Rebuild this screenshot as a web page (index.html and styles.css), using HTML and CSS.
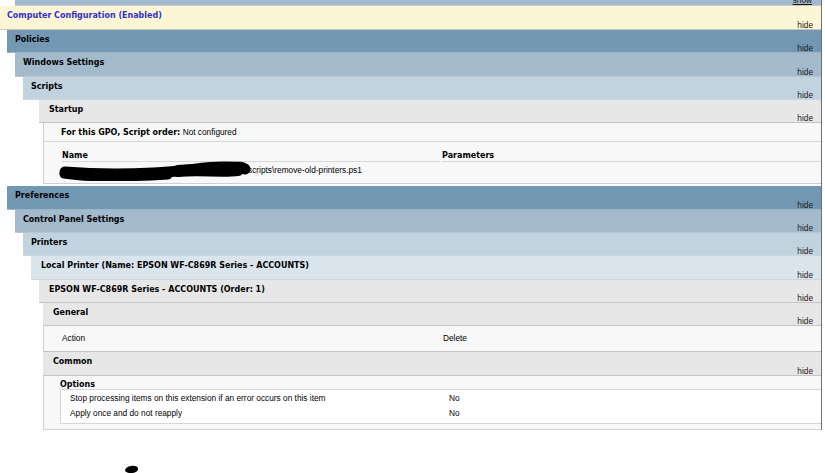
FILE: index.html
```html
<!DOCTYPE html>
<html>
<head>
<meta charset="utf-8">
<link rel="stylesheet" href="styles.css">
</head>
<body>
<div class="page">
  <div class="strip"><span class="show">show</span></div>
  <div class="hdr cfg tall"><span class="t">Computer Configuration (Enabled)</span><span class="hide">hide</span></div>

  <div class="sec l1">
    <div class="hdr c1"><span class="t">Policies</span><span class="hide">hide</span></div>
    <div class="sec l2">
      <div class="hdr c2 tall"><span class="t">Windows Settings</span><span class="hide">hide</span></div>
      <div class="sec l3">
        <div class="hdr c3"><span class="t">Scripts</span><span class="hide">hide</span></div>
        <div class="sec l5">
          <div class="hdr c5 pad10"><span class="t">Startup</span><span class="hide">hide</span></div>
          <div class="body">
            <div class="gpo"><b>For this GPO, Script order:</b> Not configured</div>
            <div class="tbl">
              <div class="th"><span class="col1">Name</span><span class="col2">Parameters</span></div>
              <div class="tr">
                <span class="col1 path">scripts\remove-old-printers.ps1</span><span class="col2"></span>
                <svg class="scribble" width="194" height="22" viewBox="0 0 194 22"><path d="M7 13 C 30 15, 60 16, 95 14 S 145 8, 165 8 S 184 8, 187 10" fill="none" stroke="#000" stroke-width="11" stroke-linecap="round"/><path d="M6 15 C 25 18, 60 19, 110 16" fill="none" stroke="#000" stroke-width="9" stroke-linecap="round"/><path d="M120 12 C 140 10, 165 13, 180 11" fill="none" stroke="#000" stroke-width="12" stroke-linecap="round"/></svg>
              </div>
            </div>
          </div>
        </div>
      </div>
    </div>
  </div>

  <div class="sec l1 pref">
    <div class="hdr c1 tall"><span class="t">Preferences</span><span class="hide">hide</span></div>
    <div class="sec l2">
      <div class="hdr c2"><span class="t">Control Panel Settings</span><span class="hide">hide</span></div>
      <div class="sec l3">
        <div class="hdr c3"><span class="t">Printers</span><span class="hide">hide</span></div>
        <div class="sec l4">
          <div class="hdr c4 tall pad10"><span class="t">Local Printer (Name: EPSON WF-C869R Series - ACCOUNTS)</span><span class="hide">hide</span></div>
          <div class="sec l4b">
            <div class="hdr c5 pad10"><span class="t">EPSON WF-C869R Series - ACCOUNTS (Order: 1)</span><span class="hide">hide</span></div>
            <div class="sec l6">
              <div class="hdr c5 pad10"><span class="t">General</span><span class="hide">hide</span></div>
              <div class="row"><span class="col1">Action</span><span class="col2">Delete</span></div>
              <div class="hdr c5 tall pad10"><span class="t">Common</span><span class="hide">hide</span></div>
              <div class="opts">
                <div class="opttitle">Options</div>
                <div class="optbox">
                  <div class="optrow"><span class="oname">Stop processing items on this extension if an error occurs on this item</span><span class="oval">No</span></div>
                  <div class="optrow"><span class="oname">Apply once and do not reapply</span><span class="oval">No</span></div>
                </div>
              </div>
            </div>
          </div>
        </div>
      </div>
    </div>
  </div>
</div>
<div class="blob"></div>
</body>
</html>
```

FILE: styles.css
```css
* { box-sizing: border-box; }
body {
  margin: 0;
  background: #fff;
  font-family: "Liberation Sans", Arial, sans-serif;
  font-size: 8.3px;
  color: #000;
  position: relative;
  height: 473px;
}
b, .hdr .t, .th, .opttitle {
  font-family: "DejaVu Sans", Verdana, sans-serif;
  font-weight: bold;
  font-size: 8px;
}
.page {
  width: 822px;
  border-right: 1px solid #6f6f6f;
  background: #fff;
}
.strip {
  height: 6px;
  margin-left: 15px;
  background: #a3bace;
  border-bottom: 1px solid #c9c9c9;
  overflow: hidden;
  display: flex;
  justify-content: flex-end;
  align-items: flex-end;
  padding-right: 9px;
}
.show {
  text-decoration: underline;
  line-height: 9px;
  color: #111;
}
.hdr {
  display: flex;
  justify-content: space-between;
  height: 23px;
  border-bottom: 1px solid #c3c6c9;
  padding: 5px 8px 0 8px;
  line-height: 9px;
}
.hdr.tall { height: 24px; }
.hdr.pad10 { padding-left: 10px; }
.hdr .hide { align-self: flex-end; color: #1a1a1a; margin-bottom: -1px; }
.cfg { background: #fdf6d6; padding-left: 7px; border-bottom-color: #c9c6b8; }
.cfg .t { color: #3232c8; }
.c1 { background: #7398b4; border-bottom-color: #9fb3c3; }
.c2 { background: #a3bacd; border-bottom-color: #b9c7d2; }
.c3 { background: #c1d3df; border-bottom-color: #cdd6dc; }
.c4 { background: #dae4ec; border-bottom-color: #cfd5da; }
.c5 { background: #e7e7e7; border-bottom-color: #c4c4c4; }

.l1 { margin-left: 7px; }
.l2 { margin-left: 8px; }
.l3 { margin-left: 8px; }
.l4 { margin-left: 8px; }
.l4b { margin-left: 8px; }
.l5 { margin-left: 16px; }
.l6 { margin-left: 4px; }
.pref { margin-top: 2px; }

.body {
  margin-left: 4px;
  background: #f8f8f8;
  border-left: 1px solid #cfcfcf;
  border-bottom: 1px solid #cfcfcf;
  height: 61px;
}
.gpo {
  height: 19px;
  padding: 5px 0 0 17px;
  line-height: 9px;
  border-bottom: 1px solid #d4d4d4;
}
.tbl { padding: 0 0 0 18px; }
.th {
  display: flex;
  height: 20px;
  padding-top: 9px;
  line-height: 9px;
}
.th span { border-bottom: 1px solid #d8d8d8; padding-bottom: 2px; }
.col1 { width: 380px; flex: none; }
.col2 { flex: 1; }
.th .col1 { width: 378px; margin-right: 2px; }
.tr {
  display: flex;
  height: 18px;
  line-height: 9px;
  padding-top: 4px;
  position: relative;
}
.path { padding-left: 186px; }
.scribble { position: absolute; left: -4px; top: -3px; }

.row {
  display: flex;
  height: 26px;
  background: #f8f8f8;
  border-left: 1px solid #cfcfcf;
  border-bottom: 1px solid #c4c4c4;
  padding: 8px 0 0 18px;
  line-height: 9px;
}
.row .col1 { width: 381px; }

.opts {
  background: #f8f8f8;
  border-left: 1px solid #cfcfcf;
  border-bottom: 1px solid #d4d4d4;
  height: 54px;
  padding: 3px 0 0 16px;
}
.opttitle { line-height: 9px; height: 10px; padding-top: 1px; }
.optbox {
  background: #fff;
  border: 1px solid #d6d6d6;
  border-right: none;
  height: 35px;
  padding: 4px 0 0 9px;
}
.optrow { display: flex; height: 15px; line-height: 9px; }
.oname { width: 379px; flex: none; }

.blob {
  position: absolute;
  left: 125px;
  top: 466px;
  width: 13px;
  height: 7px;
  background: #000;
  border-radius: 50% 40% 45% 50%;
  transform: rotate(-8deg);
}
```
